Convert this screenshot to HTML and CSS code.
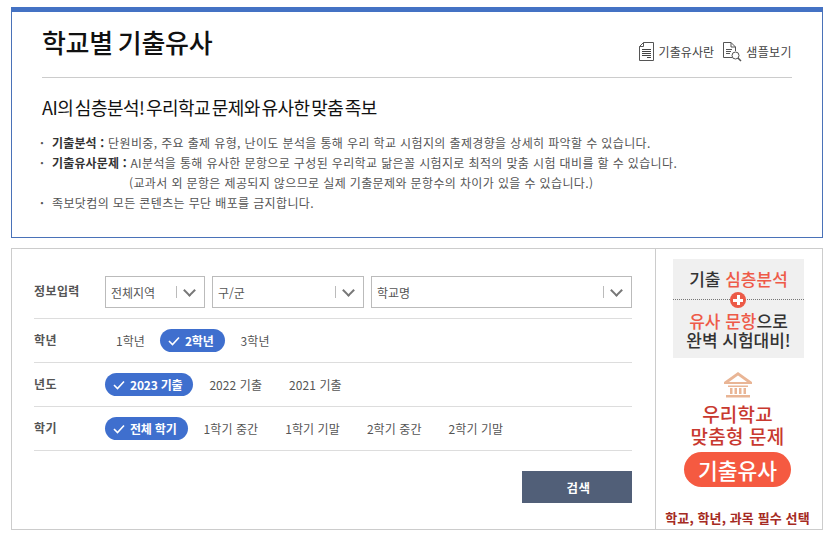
FILE: index.html
```html
<!DOCTYPE html>
<html lang="ko">
<head>
<meta charset="utf-8">
<title>학교별 기출유사</title>
<link rel="stylesheet" href="styles.css">
</head>
<body>
<section class="intro">
  <header class="intro-head">
    <h1>학교별 기출유사</h1>
    <nav class="links">
      <a class="link">
        <svg class="ico" width="17" height="19" viewBox="0 0 17 19" fill="none" stroke="#555" stroke-width="1"><path d="M5.5 .5H15.5V18.5H1.5V4.500Z"/><path d="M5.5 .5V4.500H1.5"/><path d="M4 7.5H13M4 9.5H13M4 11.5H13M4 13.5H13M9 15.5H13" stroke="#444"/></svg>
        <span>기출유사란</span>
      </a>
      <a class="link">
        <svg class="ico" width="20" height="20" viewBox="0 0 20 20" fill="none" stroke="#555" stroke-width="1"><path d="M10 15.5H1.5V.5H9L13.5 5V9"/><path d="M9 .5V5H13.5"/><path d="M4 7.5H10M4 9.5H9M4 11.5H8"/><circle cx="13.5" cy="13.5" r="3.5"/><path d="M16 16L19 19" stroke-width="1.5"/></svg>
        <span class="wide">샘플보기</span>
      </a>
    </nav>
  </header>
  <h2>AI의 심층분석! 우리학교 문제와 유사한 맞춤 족보</h2>
  <ul class="notes">
    <li><b>기출분석 :</b> 단원비중, 주요 출제 유형, 난이도 분석을 통해 우리 학교 시험지의 출제경향을 상세히 파악할 수 있습니다.</li>
    <li><b>기출유사문제 :</b> AI분석을 통해 유사한 문항으로 구성된 우리학교 닮은꼴 시험지로 최적의 맞춤 시험 대비를 할 수 있습니다.</li>
    <li class="cont">(교과서 외 문항은 제공되지 않으므로 실제 기출문제와 문항수의 차이가 있을 수 있습니다.)</li>
    <li>족보닷컴의 모든 콘텐츠는 무단 배포를 금지합니다.</li>
  </ul>
</section>

<section class="finder">
  <div class="form">
    <div class="row row-select">
      <div class="label">정보입력</div>
      <div class="selects">
        <div class="select s-region"><span>전체지역</span><i class="chev"></i></div>
        <div class="select s-gu"><span>구/군</span><i class="chev"></i></div>
        <div class="select s-school"><span>학교명</span><i class="chev"></i></div>
      </div>
    </div>
    <div class="row">
      <div class="label">학년</div>
      <div class="opts opts-grade">
        <span class="opt">1학년</span>
        <span class="opt on"><svg width="12" height="10" viewBox="0 0 12 10" fill="none" stroke="#fff" stroke-width="1.6"><path d="M1 5L4.5 8.5L11 1.5"/></svg>2학년</span>
        <span class="opt">3학년</span>
      </div>
    </div>
    <div class="row">
      <div class="label">년도</div>
      <div class="opts">
        <span class="opt on"><svg width="12" height="10" viewBox="0 0 12 10" fill="none" stroke="#fff" stroke-width="1.6"><path d="M1 5L4.5 8.5L11 1.5"/></svg>2023 기출</span>
        <span class="opt">2022 기출</span>
        <span class="opt">2021 기출</span>
      </div>
    </div>
    <div class="row">
      <div class="label">학기</div>
      <div class="opts">
        <span class="opt on"><svg width="12" height="10" viewBox="0 0 12 10" fill="none" stroke="#fff" stroke-width="1.6"><path d="M1 5L4.5 8.5L11 1.5"/></svg>전체 학기</span>
        <span class="opt">1학기 중간</span>
        <span class="opt">1학기 기말</span>
        <span class="opt">2학기 중간</span>
        <span class="opt">2학기 기말</span>
      </div>
    </div>
    <div class="actions"><button class="search">검색</button></div>
  </div>
  <aside class="promo">
    <div class="promo-box">
      <p class="pb-top">기출 <em>심층분석</em></p>
      <div class="plus-line"><span class="plus"></span></div>
      <p class="pb-bottom"><em>유사 문항</em>으로<br>완벽 시험대비!</p>
    </div>
    <svg class="temple" width="30" height="26" viewBox="0 0 30 26" fill="#e9b595"><path d="M15 0L29 10V12H1V10ZM15 3.5L6 10H24Z" fill-rule="evenodd"/><path d="M5 13.500H25V15H5ZM7 16H9.500V22H7ZM11.500 16H14V22H11.500ZM16 16H18.500V22H16ZM20.500 16H23V22H20.500ZM3 23H27V25.500H3Z"/></svg>
    <p class="promo-title">우리학교<br>맞춤형 문제</p>
    <div class="promo-btn">기출유사</div>
    <p class="promo-foot">학교, 학년, 과목 필수 선택</p>
  </aside>
</section>
</body>
</html>
```
FILE: styles.css
```css
* { box-sizing: border-box; }
html, body { margin: 0; padding: 0; }
body {
  width: 832px;
  height: 539px;
  padding: 7px 9px 0 11px;
  overflow: hidden;
  background: #fff;
  color: #333;
  font-family: "Noto Sans CJK KR", "Noto Sans", sans-serif;
}
p, ul, h1, h2 { margin: 0; padding: 0; }

.intro {
  height: 231px;
  border: 1px solid #4a72b8;
  border-top: 5px solid #4472c4;
  padding: 0 30px;
}
.intro-head {
  height: 66px;
  border-bottom: 1px solid #ccc;
  display: flex;
  justify-content: space-between;
}
h1 {
  font-size: 26px;
  line-height: 36px;
  margin-top: 12px;
  font-weight: 500;
  color: #111;
  letter-spacing: -.3px;
  word-spacing: -2px;
}
.links { display: flex; gap: 8px; padding-top: 30px; }
.link { display: flex; align-items: flex-start; gap: 4px; font-size: 12px; line-height: 20px; color: #444; letter-spacing: .1px; }
.link .wide { letter-spacing: .4px; }
.ico { flex: none; }

h2 {
  font-size: 18px;
  line-height: 26px;
  margin-top: 16px;
  font-weight: 400;
  color: #111;
  letter-spacing: -.5px;
  word-spacing: -3px;
}
.notes { list-style: none; margin-top: 13px; font-size: 12px; line-height: 20px; color: #555; letter-spacing: .37px; }
.notes li { padding-left: 10px; position: relative; white-space: nowrap; }
.notes li::before { content: "·"; position: absolute; left: -2px; top: 0; color: #555; font-weight: 700; }
.notes li.cont { padding-left: 87px; }
.notes li.cont::before { content: none; }
.notes b { font-weight: 700; color: #333; letter-spacing: .15px; }

.finder {
  margin-top: 10px;
  height: 282px;
  border: 1px solid #ccc;
  display: flex;
}
.form { padding: 27px 23px 0 22px; flex: none; border-right: 1px solid #ccc; width: 644px; }
.row { display: flex; align-items: center; height: 44px; border-bottom: 1px solid #ddd; }
.row-select { height: 43px; align-items: flex-start; }
.label { width: 71px; flex: none; font-size: 12px; font-weight: 700; color: #555; line-height: 18px; letter-spacing: .4px; padding-bottom: 2px; }
.row-select .label { padding-top: 6px; }
.selects { display: flex; gap: 7px; flex: 1; }
.select {
  height: 32px;
  border: 1px solid #bbb;
  display: flex;
  align-items: center;
  justify-content: space-between;
  padding: 0 0 0 5px;
  font-size: 12px;
  color: #555;
}
.s-region { width: 100px; }
.s-gu { width: 152px; }
.s-school { flex: 1; }
.chev {
  position: relative;
  width: 28px;
  height: 12px;
  border-left: 1px solid #bbb;
  flex: none;
}
.chev::after {
  content: "";
  position: absolute;
  left: 8px;
  top: 0;
  width: 7px;
  height: 7px;
  border-right: 2px solid #777;
  border-bottom: 2px solid #777;
  transform: rotate(45deg);
}
.opts { display: flex; align-items: center; gap: 3px; font-size: 12px; color: #555; }
.opts-grade { margin-left: -1px; }
.opt { display: inline-flex; align-items: center; height: 23px; line-height: 23px; white-space: nowrap; letter-spacing: .08px; }
.opt:not(.on) { padding: 0 12px; }
.opt.on {
  background: #3f6fce;
  color: #fff;
  font-weight: 700;
  border-radius: 12px;
  padding: 0 11px 0 8px;
  gap: 5px;
  letter-spacing: -.2px;
  margin-right: 1px;
}
.actions { display: flex; justify-content: flex-end; padding-top: 20px; }
.search {
  width: 110px;
  height: 32px;
  border: 0;
  padding: 0 0 0 3px;
  background: #515f78;
  color: #fff;
  font: 700 12.500px "Noto Sans CJK KR", sans-serif;
  letter-spacing: .5px;
}

.promo { flex: 1; padding: 10px 3px 0 0; display: flex; flex-direction: column; align-items: center; }
.promo em { font-style: normal; color: #ee5a48; }
.promo-box {
  width: 131px;
  height: 99px;
  background: #f0f0f0;
  font-size: 17px;
  font-weight: 500;
  line-height: 19px;
  color: #333;
  text-align: center;
  margin-left: 2px;
}
.pb-top { padding-top: 10px; height: 40px; }
.plus-line { height: 1px; border-top: 1px dotted #777; position: relative; }
.plus {
  position: absolute;
  left: 57px;
  top: -8px;
  width: 16px;
  height: 16px;
  border-radius: 50%;
  background:
    linear-gradient(#fff, #fff) center / 10px 3px no-repeat,
    linear-gradient(#fff, #fff) center / 3px 10px no-repeat,
    #ec5a47;
}
.pb-bottom { padding-top: 11px; }
.temple { margin-top: 14px; display: block; }
.promo-title { margin-top: 5px; font-size: 19px; line-height: 22px; font-weight: 500; color: #c8392f; text-align: center; letter-spacing: .2px; }
.promo-btn {
  margin-top: 5px;
  width: 107px;
  height: 35px;
  border-radius: 18px;
  background: #f55a41;
  color: #fff;
  font-size: 21.500px;
  font-weight: 500;
  line-height: 35px;
  text-align: center;
}
.promo-foot { margin-top: 22px; font-size: 13px; font-weight: 700; color: #a52a22; line-height: 18px; white-space: nowrap; letter-spacing: .12px; }
```
